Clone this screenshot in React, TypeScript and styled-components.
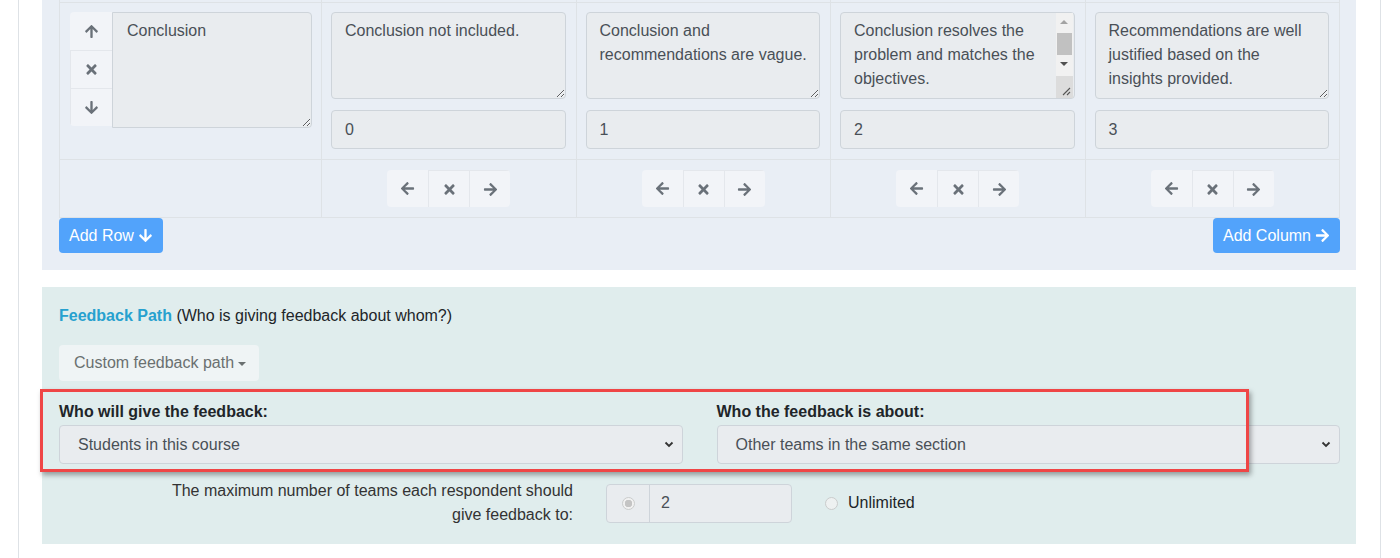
import React from "react";
import styled, { createGlobalStyle } from "styled-components";
import { FaArrowUp, FaArrowDown, FaArrowLeft, FaArrowRight, FaTimes } from "react-icons/fa";

const GlobalStyle = createGlobalStyle`
  body {
    margin: 0;
    background: #fff;
    font-family: "Liberation Sans", Arial, sans-serif;
    font-size: 16px;
    color: #212529;
  }
  * { box-sizing: border-box; }
`;

const Page = styled.div`
  height: 558px;
  overflow: hidden;
  padding-left: 18px;
`;

const Card = styled.div`
  width: 1363px;
  height: 100%;
  border-left: 1px solid #dee2e6;
  border-right: 1px solid #dee2e6;
  padding: 0 24px 0 23px;
`;

const RubricPanel = styled.div`
  background: #e9eef5;
  padding: 0 16px 17px 17px;
`;

const Table = styled.div`
  border-right: 1px solid #dee2e6;
  border-bottom: 1px solid #dee2e6;
`;

const Row = styled.div<{ $h?: number }>`
  display: grid;
  grid-template-columns: 262px repeat(4, 1fr);
  ${(p) => (p.$h ? `height: ${p.$h}px;` : "")}
`;

const StubCell = styled.div`
  border-left: 1px solid #dee2e6;
`;

const Cell = styled.div<{ $center?: boolean }>`
  border-left: 1px solid #dee2e6;
  border-top: 1px solid #dee2e6;
  padding: 9px 10px 10px 9px;
  display: flex;
  flex-direction: column;
  ${(p) => (p.$center ? "align-items: center; justify-content: center; padding: 10px;" : "")}
`;

const FirstCell = styled(Cell)`
  flex-direction: row;
  align-items: flex-start;
  padding: 9px 9px 10px 10px;
`;

const TextWrap = styled.div`
  position: relative;
  width: 100%;
`;

const TextBox = styled.textarea<{ $h: number; $flat?: boolean; $padRight?: number }>`
  display: block;
  width: 100%;
  height: ${(p) => p.$h}px;
  margin: 0;
  background: #e9ecef;
  border: 1px solid #ced4da;
  border-radius: ${(p) => (p.$flat ? "0 4px 4px 0" : "4px")};
  padding: 6px ${(p) => p.$padRight ?? 12}px 6px ${(p) => (p.$flat ? 14 : 13)}px;
  font-family: inherit;
  font-size: 16px;
  line-height: 24px;
  color: #495057;
  resize: vertical;
  overflow: hidden;
  outline: none;
`;

/* scrollbar drawn over the overflowing textarea */
const ScrollBar = styled.div`
  position: absolute;
  top: 1px;
  right: 2px;
  bottom: 1px;
  width: 17px;
  display: flex;
  flex-direction: column;
  background: #f1f1f1;
`;

const ScrollArrow = styled.div<{ $down?: boolean }>`
  height: 17px;
  flex-shrink: 0;
  display: flex;
  align-items: center;
  justify-content: center;
  &::before {
    content: "";
    border-left: 4px solid transparent;
    border-right: 4px solid transparent;
    ${(p) =>
      p.$down ? "border-top: 4px solid #505050;" : "border-bottom: 4px solid #a3a3a3;"}
  }
`;

const ScrollTrack = styled.div`
  height: 25px;
  padding: 3px 1px 0;
`;

const ScrollThumb = styled.div`
  height: 22px;
  background: #c1c1c1;
`;

const ScrollCorner = styled.div`
  margin-top: auto;
  height: 22px;
  background: #dcdcdc;
  display: flex;
  align-items: flex-end;
  justify-content: flex-end;
  padding: 0 2px 2px 0;
`;

const NumberBox = styled.div`
  height: 39px;
  margin-top: 11px;
  background: #e9ecef;
  border: 1px solid #ced4da;
  border-radius: 4px;
  padding: 0 13px;
  display: flex;
  align-items: center;
  color: #495057;
`;

const ButtonGroup = styled.div<{ $vertical?: boolean }>`
  display: flex;
  flex-direction: ${(p) => (p.$vertical ? "column" : "row")};
  flex-shrink: 0;
  border-radius: ${(p) => (p.$vertical ? "4px 0 0 4px" : "4px")};
  overflow: hidden;
`;

const IconButton = styled.button<{ $vertical?: boolean }>`
  width: ${(p) => (p.$vertical ? "42px" : "41px")};
  height: ${(p) => (p.$vertical ? "38px" : "37px")};
  border: none;
  padding: 0;
  background: #f2f4f8;
  color: #6a7179;
  display: flex;
  align-items: center;
  justify-content: center;
  & + & {
    ${(p) => (p.$vertical ? "border-top: 1px solid #e4e7ec;" : "border-left: 1px solid #e4e7ec;")}
  }
`;

const ActionsRow = styled.div`
  display: flex;
  justify-content: space-between;
`;

const PrimaryButton = styled.button`
  height: 35px;
  padding: 0 10px;
  background: #52a3fb;
  color: #fff;
  border: none;
  border-radius: 4px;
  font-family: inherit;
  font-size: 16px;
  display: flex;
  align-items: center;
  gap: 4px;
`;

const FeedbackPanel = styled.div`
  position: relative;
  margin-top: 17px;
  background: #e0eded;
  padding: 17px 16px 17px 17px;
`;

const Title = styled.div`
  line-height: 24px;
`;

const TitleAccent = styled.span`
  color: #27a1cf;
  font-weight: bold;
`;

const DropdownButton = styled.div`
  margin-top: 17px;
  display: inline-flex;
  align-items: center;
  height: 36px;
  padding: 0 13px 0 15px;
  background: #eff4f5;
  color: #6a7070;
  border-radius: 4px;
  &::after {
    content: "";
    margin-left: 4px;
    margin-top: 1px;
    border-top: 4px solid #6a7070;
    border-left: 4px solid transparent;
    border-right: 4px solid transparent;
  }
`;

const SelectRow = styled.div`
  margin-top: 19px;
  display: grid;
  grid-template-columns: 1fr 1fr;
  gap: 34px;
`;

const FieldLabel = styled.div`
  font-weight: bold;
  line-height: 24px;
  margin-bottom: 1px;
`;

const SelectBox = styled.div`
  height: 39px;
  background: #e9ecef;
  border: 1px solid #ced4da;
  border-radius: 4px;
  padding: 0 8px 0 18px;
  display: flex;
  align-items: center;
  justify-content: space-between;
  color: #495057;
`;

const LimitRow = styled.div`
  margin-top: 15px;
  display: flex;
  align-items: center;
`;

const LimitLabel = styled.div`
  width: 514px;
  padding-left: 110px;
  text-align: right;
  line-height: 24px;
  color: #333;
`;

const InputGroup = styled.div`
  margin-left: 33px;
  width: 186px;
  height: 39px;
  display: flex;
  border: 1px solid #ced4da;
  border-radius: 4px;
  background: #e9ecef;
  overflow: hidden;
`;

const Addon = styled.div`
  width: 43px;
  border-right: 1px solid #ced4da;
  display: flex;
  align-items: center;
  justify-content: center;
`;

const Radio = styled.span<{ $checked?: boolean }>`
  display: inline-block;
  width: 13px;
  height: 13px;
  border-radius: 50%;
  border: 1px solid #cacccc;
  background: ${(p) =>
    p.$checked ? "radial-gradient(circle, #c4c4c4 0 3.5px, #f1f1f1 4px)" : "#eef1f1"};
`;

const InputValue = styled.div`
  padding-left: 11px;
  display: flex;
  align-items: center;
  color: #495057;
`;

const RadioLabel = styled.label`
  margin-left: 33px;
  display: flex;
  align-items: center;
  gap: 10px;
  color: #212529;
`;

const Highlight = styled.div`
  position: absolute;
  left: -2px;
  top: 102px;
  width: 1209px;
  height: 83px;
  border: 3px solid #ef4646;
  box-shadow: 2px 3px 5px rgba(0, 0, 0, 0.35);
  pointer-events: none;
`;

const levels = [
  { text: "Conclusion not included.", value: "0" },
  { text: "Conclusion and recommendations are vague.", value: "1" },
  { text: "Conclusion resolves the problem and matches the objectives.", value: "2", scroll: true },
  { text: "Recommendations are well justified based on the insights provided.", value: "3" },
];

const iconProps = { size: 15 };

const Chevron = () => (
  <svg width="10" height="7" viewBox="0 0 10 7">
    <path d="M1.5 1.5 L5 5 L8.5 1.5" fill="none" stroke="#333" strokeWidth="1.8" />
  </svg>
);

const Grip = () => (
  <svg width="9" height="9" viewBox="0 0 9 9">
    <path d="M1 8 L8 1 M5 8 L8 5" stroke="#555" strokeWidth="1.1" />
  </svg>
);

export default function App() {
  return (
    <>
      <GlobalStyle />
      <Page>
        <Card>
          <RubricPanel>
            <Table>
              <Row $h={2}>
                {[0, 1, 2, 3, 4].map((i) => (
                  <StubCell key={i} />
                ))}
              </Row>
              <Row>
                <FirstCell>
                  <ButtonGroup $vertical>
                    <IconButton $vertical><FaArrowUp {...iconProps} /></IconButton>
                    <IconButton $vertical><FaTimes {...iconProps} /></IconButton>
                    <IconButton $vertical><FaArrowDown {...iconProps} /></IconButton>
                  </ButtonGroup>
                  <TextBox $h={116} $flat readOnly value="Conclusion" />
                </FirstCell>
                {levels.map((l) => (
                  <Cell key={l.value}>
                    <TextWrap>
                      <TextBox $h={87} $padRight={l.scroll ? 24 : 12} readOnly value={l.text} />
                      {l.scroll && (
                        <ScrollBar>
                          <ScrollArrow />
                          <ScrollTrack><ScrollThumb /></ScrollTrack>
                          <ScrollArrow $down />
                          <ScrollCorner><Grip /></ScrollCorner>
                        </ScrollBar>
                      )}
                    </TextWrap>
                    <NumberBox>{l.value}</NumberBox>
                  </Cell>
                ))}
              </Row>
              <Row>
                <Cell />
                {levels.map((l) => (
                  <Cell key={l.value} $center>
                    <ButtonGroup>
                      <IconButton><FaArrowLeft {...iconProps} /></IconButton>
                      <IconButton><FaTimes {...iconProps} /></IconButton>
                      <IconButton><FaArrowRight {...iconProps} /></IconButton>
                    </ButtonGroup>
                  </Cell>
                ))}
              </Row>
            </Table>
            <ActionsRow>
              <PrimaryButton>Add Row <FaArrowDown size={15} /></PrimaryButton>
              <PrimaryButton>Add Column <FaArrowRight size={15} /></PrimaryButton>
            </ActionsRow>
          </RubricPanel>

          <FeedbackPanel>
            <Title>
              <TitleAccent>Feedback Path</TitleAccent> (Who is giving feedback about whom?)
            </Title>
            <DropdownButton>Custom feedback path</DropdownButton>
            <SelectRow>
              <div>
                <FieldLabel>Who will give the feedback:</FieldLabel>
                <SelectBox>
                  Students in this course
                  <Chevron />
                </SelectBox>
              </div>
              <div>
                <FieldLabel>Who the feedback is about:</FieldLabel>
                <SelectBox>
                  Other teams in the same section
                  <Chevron />
                </SelectBox>
              </div>
            </SelectRow>
            <LimitRow>
              <LimitLabel>The maximum number of teams each respondent should give feedback to:</LimitLabel>
              <InputGroup>
                <Addon><Radio $checked /></Addon>
                <InputValue>2</InputValue>
              </InputGroup>
              <RadioLabel><Radio />Unlimited</RadioLabel>
            </LimitRow>
            <Highlight />
          </FeedbackPanel>
        </Card>
      </Page>
    </>
  );
}
